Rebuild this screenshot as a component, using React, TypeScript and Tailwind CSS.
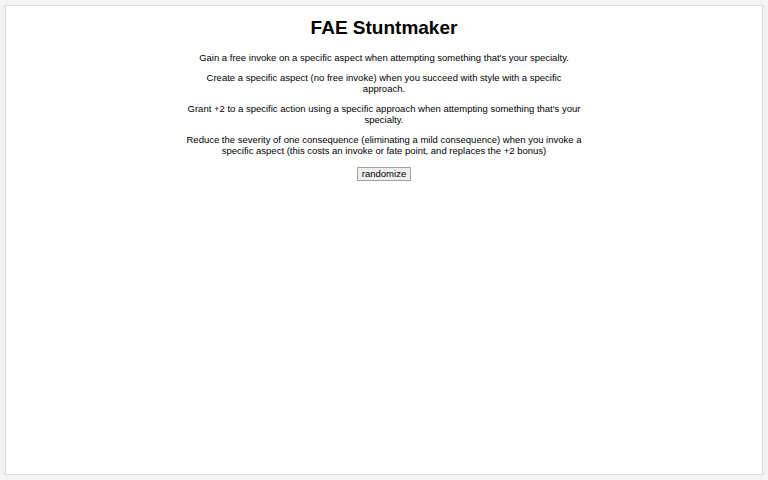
import { useState } from "react";

const stunts = [
  "Gain a free invoke on a specific aspect when attempting something that's your specialty.",
  "Create a specific aspect (no free invoke) when you succeed with style with a specific approach.",
  "Grant +2 to a specific action using a specific approach when attempting something that's your specialty.",
  "Reduce the severity of one consequence (eliminating a mild consequence) when you invoke a specific aspect (this costs an invoke or fate point, and replaces the +2 bonus)",
];

export default function App() {
  const [list, setList] = useState(stunts);

  const shuffle = () => {
    const next = [...list];
    for (let i = next.length - 1; i > 0; i--) {
      const j = Math.floor(Math.random() * (i + 1));
      [next[i], next[j]] = [next[j], next[i]];
    }
    setList(next);
  };

  return (
    <div className="h-[480px] bg-[#f3f3f3] p-[5px] font-['Liberation_Sans',Arial,sans-serif] text-black">
      <div className="h-full bg-white border border-[#dcdcdc] flex flex-col items-center">
        <h1 className="mt-[10px] text-[19px] font-bold leading-[24px]">FAE Stuntmaker</h1>

        <div className="w-[399px] mt-[12px] text-center text-[9.5px] leading-[11px]">
          {list.map((s) => (
            <p key={s} className="mb-[9px]">{s}</p>
          ))}
        </div>

        <button
          onClick={shuffle}
          className="mt-[2px] px-[4px] h-[14px] text-[9.5px] leading-none bg-[#efefef] border border-[#a0a0a0]"
        >
          randomize
        </button>
      </div>
    </div>
  );
}
